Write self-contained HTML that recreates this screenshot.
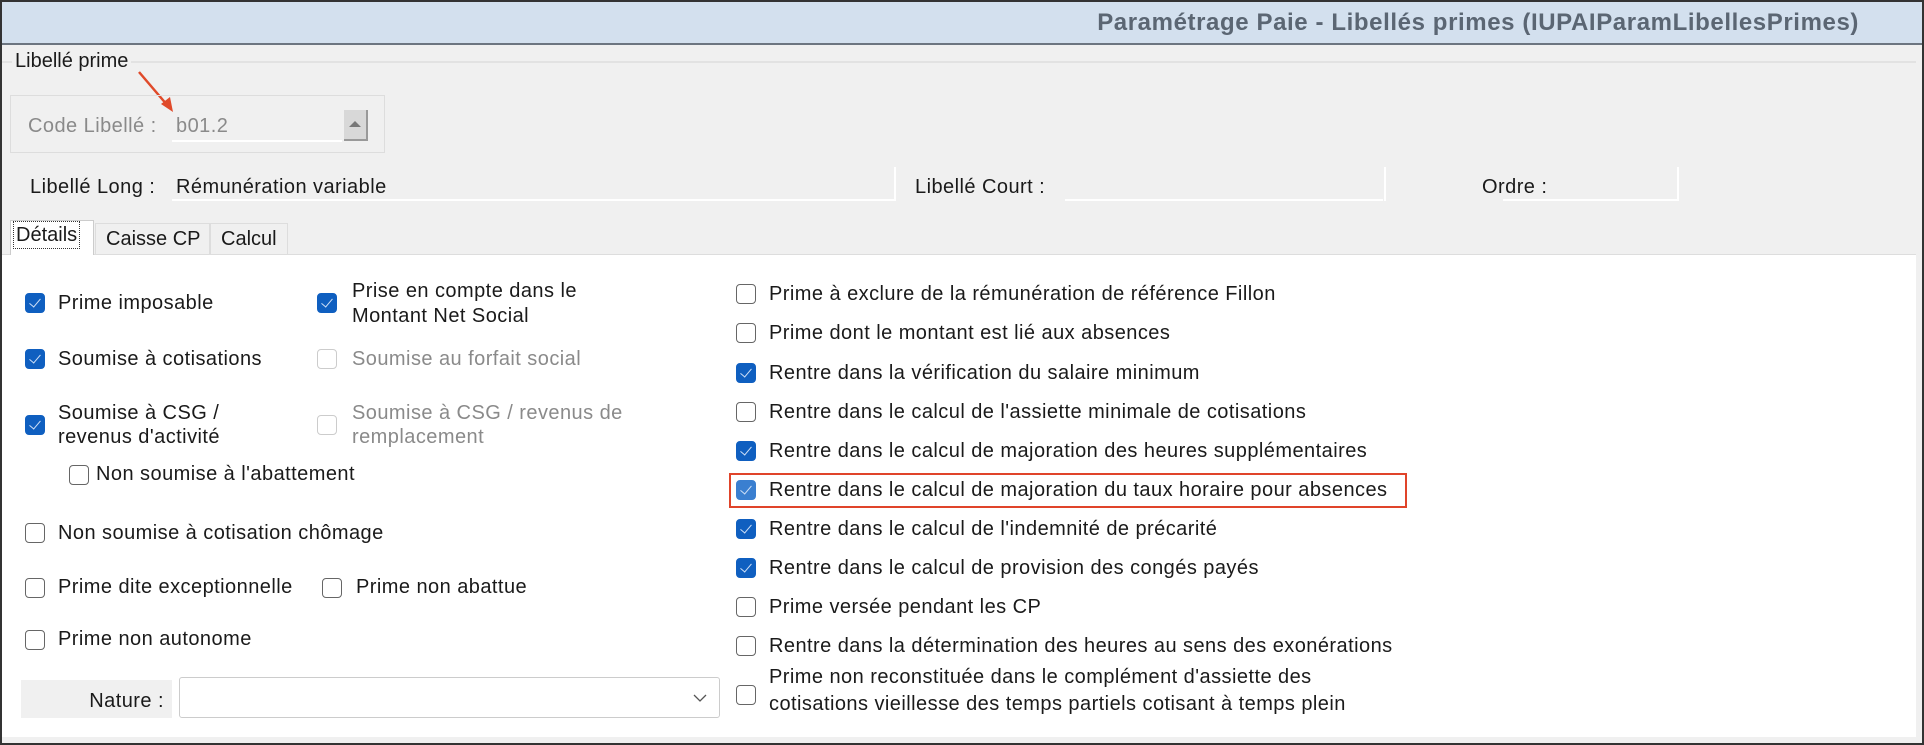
<!DOCTYPE html>
<html><head><meta charset="utf-8"><style>
*{margin:0;padding:0;box-sizing:border-box}
body{width:1924px;height:745px;background:#fff;font-family:"Liberation Sans",sans-serif;position:relative;overflow:hidden;color:#1a1a1a}
.a{position:absolute;white-space:nowrap}
.t{font-size:20px;line-height:24px;letter-spacing:0.45px}
.cb{position:absolute;width:20px;height:20px;border:1.5px solid #666;border-radius:4px;background:#fff}
.cb.on{background:#0f5fc0;border-color:#0f5fc0}
.cb.on::after{content:"";position:absolute;left:6px;top:2px;width:5px;height:10px;border:solid #cfe0f7;border-width:0 1.5px 1.5px 0;transform:rotate(40deg)}
.cb.dis{border-color:#ccc}
.dis-t{color:#8a8a8a}
.in{position:absolute;border-bottom:2px solid #fff;}
</style></head><body>
<div class="a" style="left:0;top:0;width:1924px;height:745px;border:2px solid #333;background:#f0f0f0"></div>
<div class="a" style="left:2px;top:2px;width:1920px;height:43px;background:#d3e0ee;border-bottom:2px solid #6c7580"></div>
<div class="a" style="right:65px;top:8px;font-size:24px;font-weight:bold;color:#5b6673;line-height:30px;letter-spacing:0.6px">Paramétrage Paie - Libellés primes (IUPAIParamLibellesPrimes)</div>
<div class="a" style="left:2px;top:61px;width:1914px;height:2px;background:#e2e2e2"></div>
<div class="a t" style="left:12px;top:49px;background:#f0f0f0;padding:0 3px;letter-spacing:0">Libellé prime</div>
<svg class="a" style="left:130px;top:66px" width="50" height="50"><line x1="9" y1="6" x2="38" y2="40" stroke="#e04a2a" stroke-width="2.5"/><polygon points="43,46 31,38 40,31" fill="#e04a2a"/></svg>
<div class="a" style="left:10px;top:95px;width:375px;height:58px;border:1.5px solid #ddd"></div>
<div class="a t dis-t" style="left:28px;top:114px">Code Libellé :</div>
<div class="a t dis-t" style="left:176px;top:114px">b01.2</div>
<div class="in" style="left:172px;top:140px;width:170px"></div>
<div class="a" style="left:344px;top:110px;width:24px;height:31px;background:#d8d8d8;border-right:2px solid #999;border-bottom:2px solid #999"><div style="margin:11px auto 0;width:0;height:0;border-left:6px solid transparent;border-right:6px solid transparent;border-bottom:6px solid #777"></div></div>
<div class="a t" style="left:30px;top:175px">Libellé Long :</div>
<div class="a t" style="left:176px;top:175px">Rémunération variable</div>
<div class="in" style="left:172px;top:199px;width:722px"></div>
<div class="a" style="left:894px;top:167px;width:2px;height:34px;background:#fff"></div>
<div class="a t" style="left:915px;top:175px">Libellé Court :</div>
<div class="in" style="left:1065px;top:199px;width:318px"></div>
<div class="a" style="left:1384px;top:167px;width:2px;height:34px;background:#fff"></div>
<div class="a t" style="left:1482px;top:175px">Ordre :</div>
<div class="in" style="left:1503px;top:199px;width:175px"></div>
<div class="a" style="left:1677px;top:167px;width:2px;height:34px;background:#fff"></div>
<!-- tabs -->
<div class="a" style="left:2px;top:254px;width:1914px;height:483px;background:#fff;border-top:1px solid #ddd"></div>
<div class="a" style="left:10px;top:220px;width:84px;height:35px;background:#fff;border:1px solid #ccc;border-bottom:none"></div>
<div class="a t" style="left:13px;top:221px;padding:1px 2px;border:1.5px dotted #333;letter-spacing:0">Détails</div>
<div class="a t" style="left:95px;top:223px;width:115px;height:31px;border:1px solid #ddd;border-bottom:none;padding:3px 0 0 10px;letter-spacing:0">Caisse CP</div>
<div class="a t" style="left:210px;top:223px;width:78px;height:31px;border:1px solid #ddd;border-bottom:none;padding:3px 0 0 10px;letter-spacing:0">Calcul</div>
<!-- left column -->
<div class="cb on" style="left:25px;top:293px"></div><div class="a t" style="left:58px;top:291px">Prime imposable</div>
<div class="cb on" style="left:317px;top:293px"></div><div class="a t" style="left:352px;top:279px;line-height:25px">Prise en compte dans le<br>Montant Net Social</div>
<div class="cb on" style="left:25px;top:349px"></div><div class="a t" style="left:58px;top:347px">Soumise à cotisations</div>
<div class="cb dis" style="left:317px;top:349px"></div><div class="a t dis-t" style="left:352px;top:347px">Soumise au forfait social</div>
<div class="cb on" style="left:25px;top:415px"></div><div class="a t" style="left:58px;top:401px;line-height:24px">Soumise à CSG /<br>revenus d'activité</div>
<div class="cb dis" style="left:317px;top:415px"></div><div class="a t dis-t" style="left:352px;top:401px;line-height:24px">Soumise à CSG / revenus de<br>remplacement</div>
<div class="cb" style="left:69px;top:465px"></div><div class="a t" style="left:96px;top:462px">Non soumise à l'abattement</div>
<div class="cb" style="left:25px;top:523px"></div><div class="a t" style="left:58px;top:521px">Non soumise à cotisation chômage</div>
<div class="cb" style="left:25px;top:578px"></div><div class="a t" style="left:58px;top:575px">Prime dite exceptionnelle</div>
<div class="cb" style="left:322px;top:578px"></div><div class="a t" style="left:356px;top:575px">Prime non abattue</div>
<div class="cb" style="left:25px;top:630px"></div><div class="a t" style="left:58px;top:627px">Prime non autonome</div>
<div class="a" style="left:21px;top:680px;width:151px;height:38px;background:#f0f0f0"></div>
<div class="a t" style="left:21px;top:689px;width:143px;text-align:right">Nature :</div>
<div class="a" style="left:179px;top:677px;width:541px;height:41px;border:1px solid #ccc;border-radius:3px;background:#fff"></div>
<svg class="a" style="left:692px;top:692px" width="16" height="12"><polyline points="2,3 8,9 14,3" fill="none" stroke="#555" stroke-width="1.3"/></svg>
<!-- right column -->
<div class="cb" style="left:736px;top:284px"></div><div class="a t" style="left:769px;top:282px">Prime à exclure de la rémunération de référence Fillon</div>
<div class="cb" style="left:736px;top:323px"></div><div class="a t" style="left:769px;top:321px">Prime dont le montant est lié aux absences</div>
<div class="cb on" style="left:736px;top:363px"></div><div class="a t" style="left:769px;top:361px">Rentre dans la vérification du salaire minimum</div>
<div class="cb" style="left:736px;top:402px"></div><div class="a t" style="left:769px;top:400px">Rentre dans le calcul de l'assiette minimale de cotisations</div>
<div class="cb on" style="left:736px;top:441px"></div><div class="a t" style="left:769px;top:439px">Rentre dans le calcul de majoration des heures supplémentaires</div>
<div class="a" style="left:729px;top:473px;width:678px;height:35px;border:2px solid #e0442a"></div>
<div class="cb on" style="left:736px;top:480px;background:#3a7fd0;border-color:#3a7fd0"></div><div class="a t" style="left:769px;top:478px">Rentre dans le calcul de majoration du taux horaire pour absences</div>
<div class="cb on" style="left:736px;top:519px"></div><div class="a t" style="left:769px;top:517px">Rentre dans le calcul de l'indemnité de précarité</div>
<div class="cb on" style="left:736px;top:558px"></div><div class="a t" style="left:769px;top:556px">Rentre dans le calcul de provision des congés payés</div>
<div class="cb" style="left:736px;top:597px"></div><div class="a t" style="left:769px;top:595px">Prime versée pendant les CP</div>
<div class="cb" style="left:736px;top:636px"></div><div class="a t" style="left:769px;top:634px">Rentre dans la détermination des heures au sens des exonérations</div>
<div class="cb" style="left:736px;top:685px"></div><div class="a t" style="left:769px;top:664px;line-height:27px">Prime non reconstituée dans le complément d'assiette des<br>cotisations vieillesse des temps partiels cotisant à temps plein</div>
</body></html>
